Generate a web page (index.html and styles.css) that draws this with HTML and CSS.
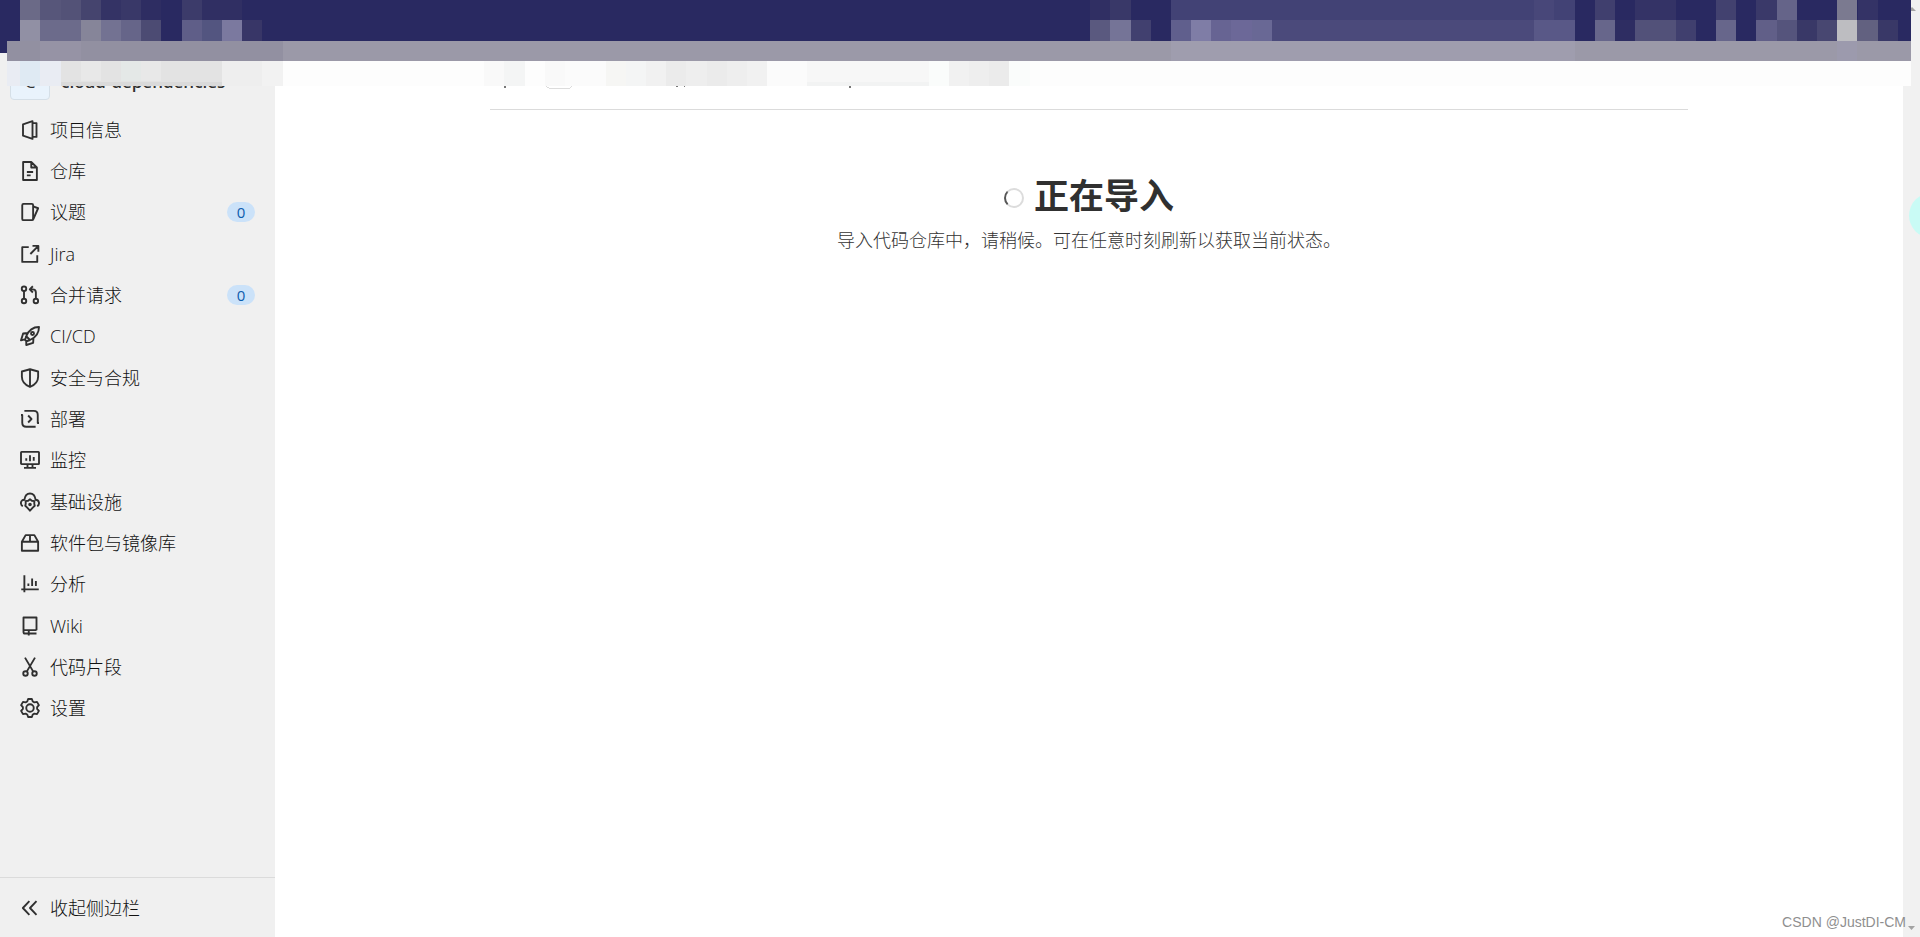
FILE: index.html
```html
<!DOCTYPE html>
<html lang="zh-CN">
<head>
    <meta charset="UTF-8">
    <meta name="viewport" content="width=device-width, initial-scale=1.0">
    <title>正在导入</title>
    <link rel="stylesheet" href="styles.css">
</head>

<body>

    <div class="window">
        <header class="navbar"></header>

        <div class="layout">
            <aside class="sidebar">
                <a href="#" class="project">
                    <span class="avatar">C</span>
                    <span class="project-name">cloud-dependencies</span>
                </a>

                <nav>
                    <ul class="menu">
                        <li><a href="#">
                            <svg class="icon" viewBox="0 0 16 16"><path d="M10 .9v14.200l-7.600-2.600V3.500zM10 2.500h3.200v11H10"/></svg>
                            <span>项目信息</span>
                        </a></li>
                        <li><a href="#">
                            <svg class="icon" viewBox="0 0 16 16"><path d="M9 .8H2.500v14.400h11V5.200zM9 .8v4.400h4.500M5.500 8.800h5M5.500 11.500h3"/></svg>
                            <span>仓库</span>
                        </a></li>
                        <li><a href="#">
                            <svg class="icon" viewBox="0 0 16 16"><rect x="1.800" y="1.500" width="8.700" height="13" rx="1"/><path d="M10.500 3.500l4 1.500-4 9"/></svg>
                            <span>议题</span>
                            <span class="badge">0</span>
                        </a></li>
                        <li><a href="#">
                            <svg class="icon" viewBox="0 0 16 16"><path d="M7 2.500H1.800v11.800h12V9M10 1.500h4.700v4.700M14.700 1.500L8.300 8"/></svg>
                            <span>Jira</span>
                        </a></li>
                        <li><a href="#">
                            <svg class="icon" viewBox="0 0 16 16"><circle cx="3.200" cy="3" r="1.800"/><circle cx="3.200" cy="12.800" r="1.800"/><circle cx="12.700" cy="12.800" r="1.800"/><path d="M3.200 4.700v6.400M12.700 11V6q0-2.500-2.500-2.500H8M10.300 1L7.800 3.500 10.300 6"/></svg>
                            <span>合并请求</span>
                            <span class="badge">0</span>
                        </a></li>
                        <li><a href="#">
                            <svg class="icon" viewBox="0 0 16 16"><path d="M15.200.8c-5 0-8 2-10.200 7.400L8 11.200c5-2.200 7.200-5.200 7.200-10.400zM6.300 5.500L2.500 6 .8 11.500l3.700-1M10.800 9.500l-.3 4-5.500 1.700v-3M5 8.200l-1 3 1.300 1L8 11.200"/><circle cx="10" cy="6" r="1.200"/></svg>
                            <span>CI/CD</span>
                        </a></li>
                        <li><a href="#">
                            <svg class="icon" viewBox="0 0 16 16"><path d="M8 1L1.500 2.800V7c0 4 2.500 6.500 6.500 8.200 4-1.700 6.500-4.200 6.500-8.200V2.800zM8 1v14"/></svg>
                            <span>安全与合规</span>
                        </a></li>
                        <li><a href="#">
                            <svg class="icon" viewBox="0 0 16 16"><path d="M3.500 1.500H11q3.200 0 3.200 3.200v6.500h1M.8 4.800h1V11q0 3.200 3.200 3.200h7.500M6.500 5.200L9.200 8l-2.700 2.800"/></svg>
                            <span>部署</span>
                        </a></li>
                        <li><a href="#">
                            <svg class="icon" viewBox="0 0 16 16"><rect x=".8" y="1.500" width="14.400" height="9.800" rx=".5"/><path d="M6 11.500v2.500M10 11.500v2.500M3.200 14.300h9.600M5 6.500v2M8 4.200V9M11 5.500v3"/></svg>
                            <span>监控</span>
                        </a></li>
                        <li><a href="#">
                            <svg class="icon" viewBox="0 0 16 16"><path d="M2.300 11.300C.5 10.500.3 8 1.500 6.900c.5-.5 1.200-.7 2-.7C4 3 5.500 1.200 8 1.200s4 1.800 4.500 5c2.700 0 3.800 3.800 1.200 5.100M8 5.800l1.500 1.200 2 .3-.1 2 .4 1.700-1.600 1.500L8 15l-2.200-2.500L4.200 11l.4-1.700-.1-2 2-.3z"/><circle cx="8" cy="10" r=".7"/></svg>
                            <span>基础设施</span>
                        </a></li>
                        <li><a href="#">
                            <svg class="icon" viewBox="0 0 16 16"><path d="M1.500 7v7.200h13V7l-3-5.300h-7zM1.500 7h13M8 1.700V7"/></svg>
                            <span>软件包与镜像库</span>
                        </a></li>
                        <li><a href="#">
                            <svg class="icon" viewBox="0 0 16 16"><path d="M3.500 1v13.500M1 12.300h14M6.700 7.500v2M9.700 3.500v6M12.700 5.500v4"/></svg>
                            <span>分析</span>
                        </a></li>
                        <li><a href="#">
                            <svg class="icon" viewBox="0 0 16 16"><path d="M13.200 11.300V1.200H2.800v11.500q0 1.300 1.200 1.300h9.200M2.800 11.300h10.400M7 12v3.500"/></svg>
                            <span>Wiki</span>
                        </a></li>
                        <li><a href="#">
                            <svg class="icon" viewBox="0 0 16 16"><path d="M4 .5l6.500 11M12 .5l-6.500 11"/><circle cx="4.400" cy="13.200" r="1.800"/><circle cx="11.600" cy="13.200" r="1.800"/></svg>
                            <span>代码片段</span>
                        </a></li>
                        <li><a href="#">
                            <svg class="icon" viewBox="0 0 16 16"><path d="M6.500.8h3l.7 2 1.300.7 2.100-.4 1.500 2.600L13.700 7.300v1.400l1.400 1.600-1.500 2.600-2.100-.4-1.300.7-.7 2h-3l-.7-2-1.300-.7-2.100.4-1.500-2.600 1.400-1.600V7.300L.9 5.700l1.500-2.600 2.100.4 1.300-.7z"/><circle cx="8" cy="8" r="3"/></svg>
                            <span>设置</span>
                        </a></li>
                    </ul>
                </nav>

                <button type="button" class="collapse">
                    <svg class="icon" viewBox="0 0 16 16"><path d="M7.500 2.500L2.300 8l5.200 5.500M13.200 2.500L8 8l5.200 5.500"/></svg>
                    <span>收起侧边栏</span>
                </button>
            </aside>

            <main class="content">
                <div class="container">
                    <div class="breadcrumbs"></div>
                    <div class="import-status">
                        <h2><span class="spinner"></span>正在导入</h2>
                        <p>导入代码仓库中，请稍候。可在任意时刻刷新以获取当前状态。</p>
                    </div>
                </div>
            </main>
        </div>
    </div>

    <div class="scrollbar">
        <svg viewBox="0 0 17 17"><path d="M5 11l4-4 4 4z"/></svg>
        <svg viewBox="0 0 17 17"><path d="M5 6h7l-3.500 4z"/></svg>
    </div>

    <!-- pixelated strip over the top of the page -->
    <svg class="mosaic" viewBox="0 0 1920 92" preserveAspectRatio="none" shape-rendering="crispEdges">
        <path fill="#292961" d="M0 0h1911v41H0z"/>
        <!-- first row -->
        <path fill="#6b6a87" d="M20 0h20v20H20z"/>
        <path fill="#57567a" d="M40 0h21v20H40z"/>
        <path fill="#535277" d="M61 0h20v20H61z"/>
        <path fill="#45446e" d="M81 0h20v20H81z"/>
        <path fill="#343365" d="M101 0h20v20h-20z"/>
        <path fill="#393868" d="M121 0h20v20h-20z"/>
        <path fill="#2e2d62" d="M141 0h20v20h-20z"/>
        <path fill="#3c3b6a" d="M182 0h20v20h-20z"/>
        <path fill="#302f63" d="M202 0h40v20h-40zM1090 0h20v20h-20z"/>
        <path fill="#393868" d="M1110 0h21v20h-21z"/>
        <path fill="#424275" d="M1171 0h404v20h-404z"/>
        <path fill="#484779" d="M1534 0h20v20h-20z"/>
        <path fill="#403f6e" d="M1595 0h20v20h-20z"/>
        <path fill="#343366" d="M1635 0h41v20h-41zM1858 0h20v20h-20z"/>
        <path fill="#42416f" d="M1716 0h20v20h-20z"/>
        <path fill="#3a3969" d="M1756 0h21v20h-21z"/>
        <path fill="#656489" d="M1777 0h20v20h-20z"/>
        <path fill="#7b7a90" d="M1837 0h20v20h-20z"/>
        <!-- second row -->
        <path fill="#9190a4" d="M20 20h20v21H20z"/>
        <path fill="#6c6b8b" d="M40 20h41v21H40z"/>
        <path fill="#868599" d="M81 20h20v21H81z"/>
        <path fill="#737292" d="M101 20h20v21h-20z"/>
        <path fill="#666589" d="M121 20h20v21h-20z"/>
        <path fill="#4c4b73" d="M141 20h20v21h-20z"/>
        <path fill="#5f5e88" d="M182 20h20v21h-20z"/>
        <path fill="#535580" d="M202 20h20v21h-20z"/>
        <path fill="#7b799f" d="M222 20h20v21h-20z"/>
        <path fill="#383667" d="M242 20h20v21h-20z"/>
        <path fill="#5a597f" d="M1090 20h20v21h-20z"/>
        <path fill="#757497" d="M1110 20h21v21h-21z"/>
        <path fill="#41406f" d="M1131 20h20v21h-20z"/>
        <path fill="#605f8d" d="M1171 20h20v21h-20z"/>
        <path fill="#7f7da6" d="M1191 20h20v21h-20z"/>
        <path fill="#676493" d="M1211 20h20v21h-20z"/>
        <path fill="#6c6898" d="M1231 20h21v21h-21z"/>
        <path fill="#696895" d="M1252 20h20v21h-20z"/>
        <path fill="#4b4a7b" d="M1272 20h262v21h-262z"/>
        <path fill="#595887" d="M1534 20h41v21h-41z"/>
        <path fill="#67668b" d="M1595 20h20v21h-20zM1716 20h20v21h-20z"/>
        <path fill="#2e2d62" d="M1615 20h20v21h-20z"/>
        <path fill="#525179" d="M1635 20h41v21h-41z"/>
        <path fill="#403f6e" d="M1676 20h20v21h-20z"/>
        <path fill="#615f88" d="M1756 20h21v21h-21z"/>
        <path fill="#55547c" d="M1777 20h20v21h-20z"/>
        <path fill="#393867" d="M1797 20h20v21h-20zM1878 20h20v21h-20z"/>
        <path fill="#484771" d="M1817 20h20v21h-20z"/>
        <path fill="#bdbdc1" d="M1837 20h20v21h-20z"/>
        <path fill="#626180" d="M1857 20h21v21h-21z"/>
        <!-- third row -->
        <path fill="#9b99a8" d="M7 41h1904v20H7z"/>
        <path fill="#9290a1" d="M7 41h276v20H7z"/>
        <path fill="#9693a5" d="M40 41h41v20H40z"/>
        <path fill="#9f9dae" d="M1171 41h404v20h-404z"/>
        <path fill="#9c9aad" d="M1837 41h20v20h-20z"/>
        <!-- fourth row -->
        <path fill="#fdfdfd" d="M7 61h1904v25H7z"/>
        <path fill="#e9ecf3" d="M7 61h54v25H7z"/>
        <path fill="#dfeaf3" d="M20 61h20v25H20z"/>
        <path fill="#e3e3e3" d="M61 61h161v20H61z"/>
        <path fill="#e8e8e8" d="M81 61h20v20H81zM141 61h20v20h-20z"/>
        <path fill="#e4e8e7" d="M121 61h20v20h-20z"/>
        <path fill="#dadada" d="M61 82h161v4H61z"/>
        <path fill="#e3e3e3" d="M61 81h161v1H61z"/>
        <path fill="#eee" d="M222 61h40v25h-40z"/>
        <path fill="#f2f2f2" d="M262 61h21v25h-21z"/>
        <path fill="#f9f9f9" d="M484 61h20v25h-20zM545 61h20v25h-20z"/>
        <path fill="#f4f5f5" d="M504 61h21v25h-21zM626 61h20v25h-20z"/>
        <path fill="#fbfbfb" d="M565 61h41v25h-41zM767 61h40v25h-40z"/>
        <path fill="#f6f6f4" d="M606 61h20v25h-20z"/>
        <path fill="#f1f1f1" d="M646 61h20v25h-20zM747 61h20v25h-20zM949 61h20v25h-20z"/>
        <path fill="#ebebeb" d="M666 61h20v25h-20zM707 61h20v25h-20zM989 61h20v25h-20z"/>
        <path fill="#eee" d="M686 61h21v25h-21zM727 61h20v25h-20zM969 61h20v25h-20z"/>
        <path fill="#f7f7f7" d="M807 61h122v25H807z"/>
        <path fill="#f2f3f3" d="M807 82h122v4H807z"/>
        <path fill="#fafcfb" d="M929 61h20v25h-20zM1009 61h21v25h-21z"/>
        <!-- what is left of the breadcrumb line below the strip -->
        <path fill="#777" d="M504 86h2v2h-2zM676 86h2v1h-2zM684 86h1v1h-1zM849 86h2v2h-2z"/>
        <path fill="#dcdcdc" d="M546 86h1v1h-1zM547 87h2v1h-2zM549 88h21v1h-21zM570 87h1v1h-1zM571 86h1v1h-1z"/>
    </svg>

    <div class="bubble"></div>
    <div class="watermark">CSDN @JustDI-CM</div>

</body>
</html>
```
FILE: styles.css
```css
* {
    box-sizing: border-box;
}

body {
    font-family: "Open Sans", "Noto Sans CJK SC", sans-serif;
    font-size: 18px;
    font-weight: 300;
    line-height: 24px;
    color: #303030;
    background-color: #fff;
    margin: 0;
    min-height: 100vh;
    display: flex;
    position: relative;
    overflow: hidden;
}

.window {
    flex: 1;
    display: flex;
    flex-direction: column;
}

.navbar {
    height: 53px;
    background-color: #292961;
}

.layout {
    flex: 1;
    display: flex;
}

.sidebar {
    width: 275px;
    display: flex;
    flex-direction: column;
    background-color: #f0f0f0;
}

.project {
    display: flex;
    align-items: center;
    gap: 11px;
    margin: 7px 10px 9px;
    font-size: 17px;
    font-weight: 600;
    color: #303030;
    text-decoration: none;
}

.project-name {
    padding-top: 4px;
}

.avatar {
    width: 40px;
    height: 40px;
    line-height: 42px;
    text-align: center;
    font-weight: 400;
    background-color: #e9f3fc;
    border: 1px solid #d5dfe7;
    border-radius: 4px;
}

.menu {
    list-style: none;
    margin: 0;
    padding: 0;
}

.menu li:nth-child(3n) {
    margin-bottom: 1px;
}

.menu a,
.collapse {
    display: flex;
    align-items: center;
    gap: 10px;
    height: 41px;
    padding: 0 20px;
    color: #111;
    text-decoration: none;
}

.icon {
    width: 20px;
    height: 20px;
    fill: none;
    stroke: #303030;
    stroke-width: 1.5;
    stroke-linejoin: round;
}

.badge {
    width: 28px;
    height: 20px;
    margin-left: auto;
    border-radius: 10px;
    background-color: #cbe2f9;
    color: #0b5cad;
    font-size: 15px;
    font-weight: 400;
    line-height: 20px;
    text-align: center;
}

.collapse {
    height: 60px;
    margin-top: auto;
    font: inherit;
    background: none;
    border: none;
    border-top: 1px solid #dbdbdb;
    cursor: pointer;
}

.content {
    flex: 1;
    padding: 0 16px;
}

.container {
    max-width: 1198px;
    margin: 0 auto;
}

.breadcrumbs {
    height: 57px;
    border-bottom: 1px solid #dbdbdb;
}

.import-status {
    padding-top: 64px;
    text-align: center;
}

h2 {
    display: flex;
    align-items: center;
    justify-content: center;
    gap: 10px;
    margin: 0;
    font-size: 35px;
    font-weight: 700;
    line-height: 44px;
}

.spinner {
    width: 20px;
    height: 20px;
    margin-top: 4px;
    border: 2px solid #dcdcdc;
    border-left-color: #555;
    border-radius: 50%;
}

p {
    margin: 10px 0;
    color: #333;
}

.scrollbar {
    width: 17px;
    display: flex;
    flex-direction: column;
    justify-content: space-between;
    background-color: #f1f1f1;
}

.scrollbar svg {
    width: 17px;
    height: 17px;
    fill: #a3a3a3;
}

.mosaic {
    position: absolute;
    top: 0;
    left: 0;
    width: 100%;
    height: 92px;
}

.bubble {
    position: absolute;
    top: 193px;
    right: -34px;
    width: 45px;
    height: 45px;
    border-radius: 50%;
    background-color: #c9fbf5;
}

.watermark {
    position: absolute;
    right: 14px;
    bottom: 3px;
    font-family: "Liberation Sans", sans-serif;
    font-size: 14px;
    font-weight: 400;
    color: #8f8f8f;
}
```
